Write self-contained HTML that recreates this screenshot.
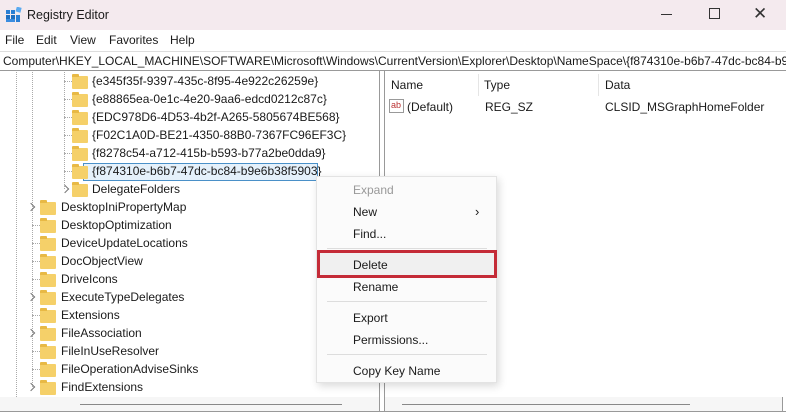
<!DOCTYPE html><html><head><style>
*{margin:0;padding:0;box-sizing:border-box}
html,body{width:786px;height:417px;overflow:hidden}
body{background:#fff;font-family:"Liberation Sans",sans-serif;font-size:12px;color:#1a1a1a;position:relative}
.a{position:absolute;white-space:nowrap}
.f{position:absolute;width:16px;height:13px;background:#f5d069;border-radius:1px}
.f:before{content:"";position:absolute;left:0;top:-2px;width:7px;height:3px;background:#e8b945;border-radius:1px 1px 0 0}
.ar{position:absolute;width:6px;height:6px;border-right:1px solid #777;border-bottom:1px solid #777;transform:rotate(-45deg)}
.dv{position:absolute;border-left:1px dotted #aaa}
.dh{position:absolute;border-top:1px dotted #aaa;width:8px}
</style></head><body>
<div class="a" style="left:0;top:0;width:786px;height:30px;background:#f4eaee"></div>
<svg class="a" style="left:6px;top:7px" width="16" height="16"><rect x="0" y="3" width="4" height="4" fill="#2a7fd4"/><rect x="5" y="3" width="4" height="4" fill="#2a7fd4"/><rect x="0" y="8" width="4" height="4" fill="#1f6fc0"/><rect x="5" y="8" width="4" height="4" fill="#1f6fc0"/><rect x="0" y="12" width="9" height="3" fill="#3b8de0"/><rect x="10" y="8" width="4" height="7" fill="#2a7fd4"/><rect x="10" y="0" width="5" height="5" fill="#5aaaf0" transform="rotate(15 12 3)"/></svg>
<div class="a" style="left:27px;top:8px;font-size:12.5px">Registry Editor</div>
<div class="a" style="left:661px;top:14px;width:11px;border-top:1px solid #333"></div>
<div class="a" style="left:709px;top:8px;width:11px;height:11px;border:1px solid #333"></div>
<div class="a" style="left:753px;top:4px;font-size:17px;color:#333">✕</div>
<div class="a" style="left:5px;top:33px">File</div><div class="a" style="left:36px;top:33px">Edit</div><div class="a" style="left:70px;top:33px">View</div><div class="a" style="left:109px;top:33px">Favorites</div><div class="a" style="left:170px;top:33px">Help</div>
<div class="a" style="left:0;top:51px;width:786px;height:20px;border-top:1px solid #ddd;border-bottom:1px solid #999;overflow:hidden">
<div class="a" style="left:3px;top:2px;font-size:12px">Computer\HKEY_LOCAL_MACHINE\SOFTWARE\Microsoft\Windows\CurrentVersion\Explorer\Desktop\NameSpace\{f874310e-b6b7-47dc-bc84-b9e6b38f5903}</div></div>
<div class="a" style="left:379px;top:71px;width:6px;height:341px;border-left:1px solid #999;border-right:1px solid #999;background:#fff"></div>
<div class="a" style="left:0;top:397px;width:379px;height:15px;background:#f6f6f6"></div>
<div class="a" style="left:385px;top:397px;width:398px;height:15px;background:#f6f6f6;border-right:1px solid #999"></div>
<div class="a" style="left:80px;top:404px;width:262px;border-top:1px solid #888"></div>
<div class="a" style="left:402px;top:404px;width:288px;border-top:1px solid #888"></div>
<div class="a" style="left:0;top:411px;width:786px;border-top:1px solid #999"></div>
<div class="dv" style="left:16px;top:72px;height:325px"></div>
<div class="dv" style="left:32px;top:72px;height:315px"></div>
<div class="dv" style="left:64px;top:72px;height:117px"></div>
<div class="a" style="left:83px;top:163px;width:235px;height:18px;border:1px solid #4a90c8;background:#e5f1fb"></div>
<div id="tree"></div>
<script>
var l2=["{e345f35f-9397-435c-8f95-4e922c26259e}","{e88865ea-0e1c-4e20-9aa6-edcd0212c87c}","{EDC978D6-4D53-4b2f-A265-5805674BE568}","{F02C1A0D-BE21-4350-88B0-7367FC96EF3C}","{f8278c54-a712-415b-b593-b77a2be0dda9}","{f874310e-b6b7-47dc-bc84-b9e6b38f5903}"];
var h="";
l2.forEach(function(t,i){var y=81+18*i;h+='<div class="dh" style="left:64px;top:'+y+'px"></div><div class="f" style="left:72px;top:'+(y-5)+'px"></div><div class="a" style="left:92px;top:'+(y-7)+'px;z-index:2">'+t+'</div>';});
h+='<div class="ar" style="left:62px;top:186px"></div><div class="f" style="left:72px;top:184px"></div><div class="a" style="left:92px;top:182px">DelegateFolders</div>';
var l1=[["DesktopIniPropertyMap",1],["DesktopOptimization",0],["DeviceUpdateLocations",0],["DocObjectView",0],["DriveIcons",0],["ExecuteTypeDelegates",1],["Extensions",0],["FileAssociation",1],["FileInUseResolver",0],["FileOperationAdviseSinks",0],["FindExtensions",1]];
l1.forEach(function(t,i){var y=207+18*i;h+=(t[1]?'<div class="ar" style="left:28px;top:'+(y-3)+'px"></div>':'<div class="dh" style="left:32px;top:'+y+'px"></div>')+'<div class="f" style="left:40px;top:'+(y-5)+'px"></div><div class="a" style="left:61px;top:'+(y-7)+'px">'+t[0]+'</div>';});
document.getElementById("tree").innerHTML=h;
</script>
<div class="a" style="left:391px;top:78px">Name</div><div class="a" style="left:484px;top:78px">Type</div><div class="a" style="left:605px;top:78px">Data</div>
<div class="a" style="left:478px;top:74px;height:22px;border-left:1px solid #e5e5e5"></div><div class="a" style="left:598px;top:74px;height:22px;border-left:1px solid #e5e5e5"></div>
<div class="a" style="left:389px;top:99px;width:15px;height:14px;border:1px solid #999;font-size:9px;color:#b33;line-height:11px;padding-left:1px;background:#fff">ab</div>
<div class="a" style="left:407px;top:100px">(Default)</div><div class="a" style="left:485px;top:100px">REG_SZ</div><div class="a" style="left:605px;top:100px">CLSID_MSGraphHomeFolder</div>
<div class="a" style="left:316px;top:176px;width:181px;height:207px;background:#fbfbfb;border:1px solid #e3e3e3;box-shadow:2px 3px 8px rgba(0,0,0,.15);z-index:3">
<div class="a" style="left:36px;top:6px;color:#999">Expand</div>
<div class="a" style="left:36px;top:28px">New</div><div class="a" style="left:158px;top:27px;font-size:13px">›</div>
<div class="a" style="left:36px;top:50px">Find...</div>
<div class="a" style="left:10px;top:71px;width:160px;border-top:1px solid #ddd"></div>
<div class="a" style="left:0;top:73px;width:180px;height:28px;border:3px solid #c42b37;background:#f0f0f0"></div>
<div class="a" style="left:36px;top:81px">Delete</div>
<div class="a" style="left:36px;top:103px">Rename</div>
<div class="a" style="left:10px;top:124px;width:160px;border-top:1px solid #ddd"></div>
<div class="a" style="left:36px;top:134px">Export</div>
<div class="a" style="left:36px;top:156px">Permissions...</div>
<div class="a" style="left:10px;top:177px;width:160px;border-top:1px solid #ddd"></div>
<div class="a" style="left:36px;top:187px">Copy Key Name</div>
</div>
</body></html>
